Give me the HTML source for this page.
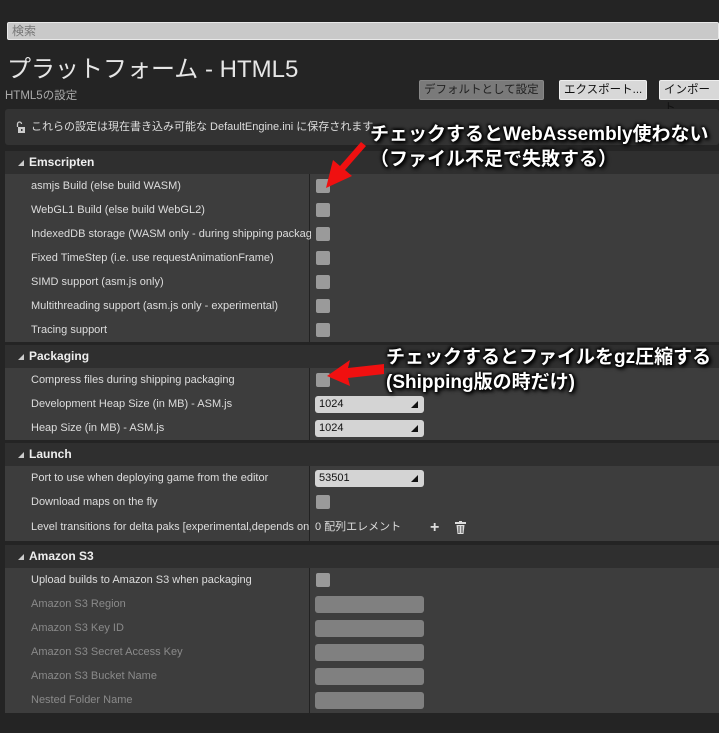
<!DOCTYPE html>
<html><head><meta charset="utf-8"><style>
*{margin:0;padding:0;box-sizing:border-box}
body{width:719px;height:733px;background:#242424;font-family:"Liberation Sans","Noto Sans CJK JP",sans-serif;color:#ddd;position:relative;overflow:hidden;font-size:11px}
.abs{position:absolute}
.search{left:7px;top:22px;width:712px;height:18px;background:#c9c9c9;border:1px solid #e8e8e8;border-radius:2px;color:#777;font-size:12px;line-height:16px;padding-left:4px}
.title{left:7px;top:49px;font-size:24px;color:#e6e6e6}
.sub{left:5px;top:87px;font-size:11.5px;color:#aaa}
.btn{top:80px;height:20px;font-size:11.5px;line-height:18px;padding:0 4px;border-radius:2px;color:#111;background:#d8d8d8;border:1px solid #eee}
.info{left:5px;top:109px;width:714px;height:36px;background:#333;border-radius:3px;font-size:11px;color:#ddd;line-height:36px;padding-left:26px}
.hdr{left:5px;width:714px;height:23px;background:#2f2f2f;font-weight:bold;font-size:12px;color:#eee;line-height:23px;padding-left:24px}
.hdr:before{content:"";position:absolute;left:13px;top:9px;border-left:6px solid transparent;border-bottom:6px solid #ccc}
.rows{left:5px;width:714px;background:#3d3d3d}
.row{height:24px;position:relative;font-size:11px;line-height:25px;padding-left:26px;color:#ddd;white-space:nowrap;overflow:hidden}
.row .l{width:280px;overflow:hidden}
.row.d{color:#8a8a8a}
.split{position:absolute;left:304px;top:0;bottom:0;width:1px;background:#222}
.cb{position:absolute;left:311px;top:5px;width:14px;height:14px;background:#9a9a9a;border-radius:2px}
.num{position:absolute;left:310px;top:4px;width:109px;height:17px;background:#d4d4d4;border-radius:3px;color:#111;font-size:11px;line-height:17px;padding-left:4px}
.num:after{content:"";position:absolute;right:6px;top:5px;border-left:7px solid transparent;border-bottom:7px solid #111}
.gb{position:absolute;left:310px;top:4px;width:109px;height:17px;background:#808080;border-radius:3px}
.ann{color:#fff;font-weight:bold;font-size:19px;text-shadow:0 0 3px #000,1px 1px 3px #000,-1px -1px 3px #000,2px 2px 4px #000;white-space:nowrap}
</style></head><body>
<div class="abs search">検索</div>
<div class="abs title">プラットフォーム - HTML5</div>
<div class="abs sub">HTML5の設定</div>
<div class="abs btn" style="left:419px;background:#7a7a7a;color:#222;border-color:#888">デフォルトとして設定</div>
<div class="abs btn" style="left:559px">エクスポート...</div>
<div class="abs btn" style="left:659px;width:70px">インポート...</div>
<div class="abs info"><svg style="position:absolute;left:11px;top:12px" width="9" height="12" viewBox="0 0 9 12"><path d="M1.5 6V3a2 2 0 0 1 4 0" stroke="#ccc" stroke-width="1.3" fill="none"/><rect x="2" y="6" width="7" height="6" fill="#ccc"/><rect x="5" y="8" width="1.5" height="2" fill="#333"/></svg>これらの設定は現在書き込み可能な DefaultEngine.ini に保存されます。</div>

<div class="abs hdr" style="top:151px">Emscripten</div>
<div class="abs rows" style="top:174px"><div class="split"></div>
<div class="row">asmjs Build (else build WASM)<div class="cb"></div></div>
<div class="row">WebGL1 Build (else build WebGL2)<div class="cb"></div></div>
<div class="row"><div class="l">IndexedDB storage (WASM only - during shipping packaging)</div><div class="cb"></div></div>
<div class="row">Fixed TimeStep (i.e. use requestAnimationFrame)<div class="cb"></div></div>
<div class="row">SIMD support (asm.js only)<div class="cb"></div></div>
<div class="row">Multithreading support (asm.js only - experimental)<div class="cb"></div></div>
<div class="row">Tracing support<div class="cb"></div></div>
</div>

<div class="abs hdr" style="top:345px">Packaging</div>
<div class="abs rows" style="top:368px"><div class="split"></div>
<div class="row">Compress files during shipping packaging<div class="cb"></div></div>
<div class="row">Development Heap Size (in MB) - ASM.js<div class="num">1024</div></div>
<div class="row">Heap Size (in MB) - ASM.js<div class="num">1024</div></div>
</div>

<div class="abs hdr" style="top:443px">Launch</div>
<div class="abs rows" style="top:466px"><div class="split"></div>
<div class="row">Port to use when deploying game from the editor<div class="num">53501</div></div>
<div class="row">Download maps on the fly<div class="cb"></div></div>
<div class="row" style="height:27px;line-height:27px"><div class="l">Level transitions for delta paks [experimental,depends on ...]</div><span style="position:absolute;left:310px;top:0">0 配列エレメント</span><span style="position:absolute;left:425px;top:0;font-size:16px;font-weight:bold">+</span><svg style="position:absolute;left:450px;top:7px" width="11" height="13" viewBox="0 0 11 13"><rect x="0" y="1" width="11" height="2" fill="#ddd"/><rect x="4" y="0" width="3" height="2" fill="#ddd"/><path d="M1.5 4h8l-1 9h-6z" fill="#ddd"/><path d="M4 5v7M7 5v7" stroke="#3d3d3d" stroke-width="1"/></svg></div>
</div>

<div class="abs hdr" style="top:545px">Amazon S3</div>
<div class="abs rows" style="top:568px;height:145px"><div class="split"></div>
<div class="row">Upload builds to Amazon S3 when packaging<div class="cb"></div></div>
<div class="row d">Amazon S3 Region<div class="gb"></div></div>
<div class="row d">Amazon S3 Key ID<div class="gb"></div></div>
<div class="row d">Amazon S3 Secret Access Key<div class="gb"></div></div>
<div class="row d">Amazon S3 Bucket Name<div class="gb"></div></div>
<div class="row d">Nested Folder Name<div class="gb"></div></div>
</div>

<div class="abs ann" style="left:370px;top:122px;line-height:25px">チェックするとWebAssembly使わない<br>（ファイル不足で失敗する）</div>
<div class="abs ann" style="left:386px;top:345px;line-height:25px">チェックするとファイルをgz圧縮する<br>(Shipping版の時だけ)</div>
<svg class="abs" style="left:0;top:0" width="719" height="733">
<path d="M366 146 L345 170 L352 176 L326 188 L333 160 L340 166 L361 142 Z" fill="#f01010"/>
<path d="M384 364 L348 368 L350 360 L327 376 L350 386 L348 378 L384 374 Z" fill="#f01010"/>
</svg>
</body></html>
